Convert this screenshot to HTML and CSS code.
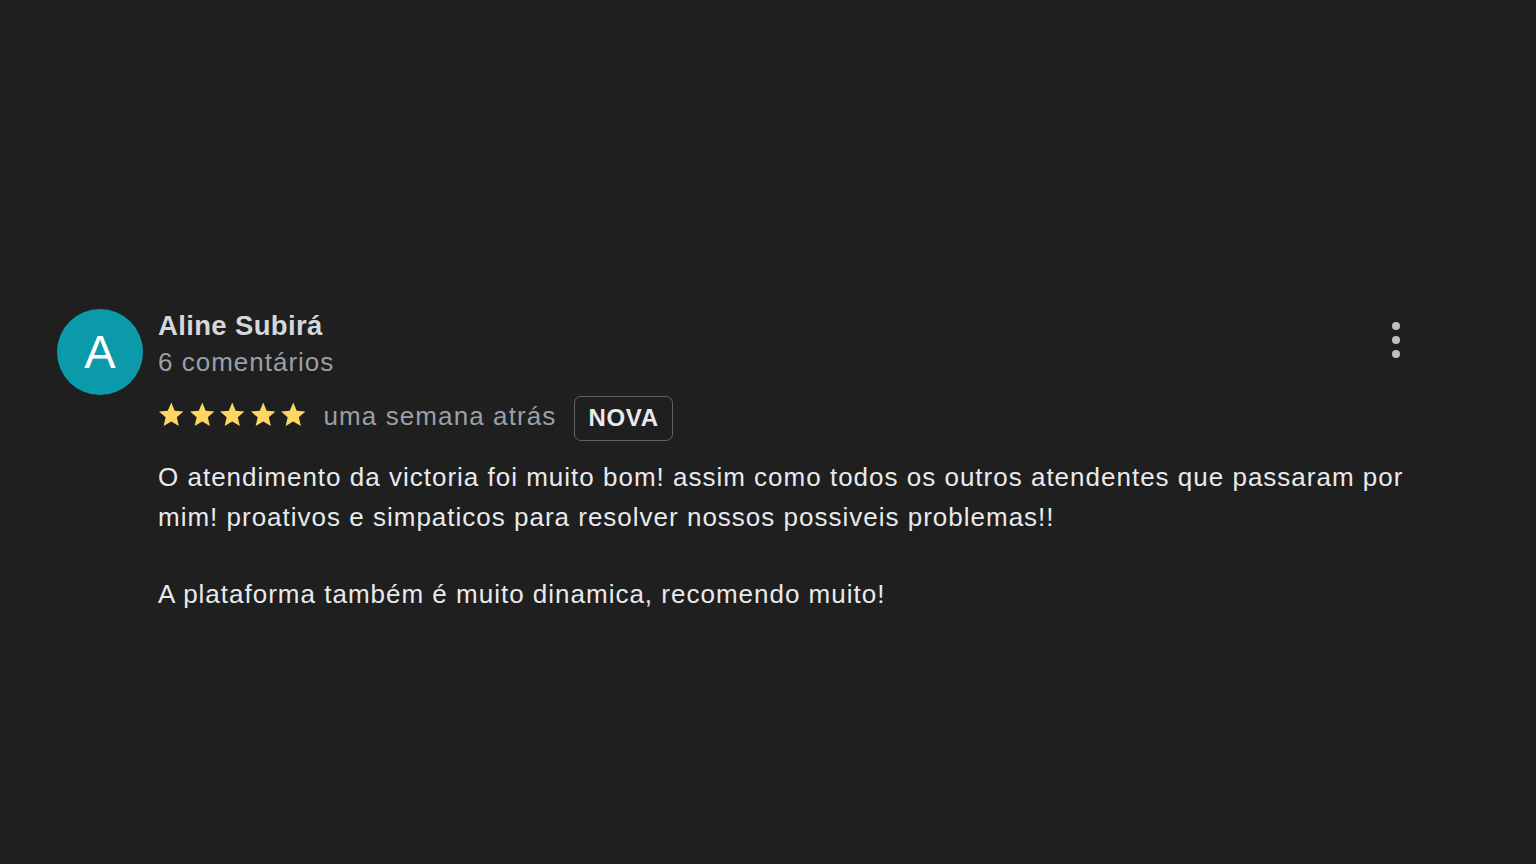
FILE: index.html
```html
<!DOCTYPE html>
<html lang="pt-BR">
<head>
<meta charset="utf-8">
<title>Avaliação</title>
<link rel="stylesheet" href="styles.css">
</head>
<body>
<div class="page">
  <div class="review">
    <div class="avatar">A</div>
    <div class="content">
      <div class="head">
        <div class="who">
          <div class="name">Aline Subirá</div>
          <div class="count">6 comentários</div>
        </div>
        <div class="menu" aria-label="Mais opções">
          <svg width="10" height="38" viewBox="0 0 10 38"><circle cx="5" cy="5" r="4"/><circle cx="5" cy="19" r="4"/><circle cx="5" cy="33" r="4"/></svg>
        </div>
      </div>
      <div class="meta">
        <div class="stars">
          <svg class="star" viewBox="0 0 24 24"><path d="M12 2.2l2.9 6.9 7.4.6-5.6 4.9 1.7 7.3L12 18l-6.4 3.9 1.7-7.3-5.6-4.9 7.4-.6z"/></svg>
          <svg class="star" viewBox="0 0 24 24"><path d="M12 2.2l2.9 6.9 7.4.6-5.6 4.9 1.7 7.3L12 18l-6.4 3.9 1.7-7.3-5.6-4.9 7.4-.6z"/></svg>
          <svg class="star" viewBox="0 0 24 24"><path d="M12 2.2l2.9 6.9 7.4.6-5.6 4.9 1.7 7.3L12 18l-6.4 3.9 1.7-7.3-5.6-4.9 7.4-.6z"/></svg>
          <svg class="star" viewBox="0 0 24 24"><path d="M12 2.2l2.9 6.9 7.4.6-5.6 4.9 1.7 7.3L12 18l-6.4 3.9 1.7-7.3-5.6-4.9 7.4-.6z"/></svg>
          <svg class="star" viewBox="0 0 24 24"><path d="M12 2.2l2.9 6.9 7.4.6-5.6 4.9 1.7 7.3L12 18l-6.4 3.9 1.7-7.3-5.6-4.9 7.4-.6z"/></svg>
        </div>
        <span class="date">uma semana atrás</span>
        <span class="badge">NOVA</span>
      </div>
      <div class="text">
        <p>O atendimento da victoria foi muito bom! assim como todos os outros atendentes que passaram por<br>mim! proativos e simpaticos para resolver nossos possiveis problemas!!</p>
        <p>A plataforma também é muito dinamica, recomendo muito!</p>
      </div>
    </div>
  </div>
</div>
</body>
</html>
```

FILE: styles.css
```css
html, body {
  margin: 0;
  padding: 0;
  background: #1f1f1f;
  height: 100%;
}
body {
  font-family: "Liberation Sans", Arial, sans-serif;
  color: #e8eaed;
}
.page {
  padding: 309px 0 0 57px;
}
.review {
  display: flex;
  gap: 15px;
  width: 1350px;
}
.avatar {
  flex: none;
  width: 86px;
  height: 86px;
  border-radius: 50%;
  background: #0a9aaa;
  color: #ffffff;
  font-size: 47px;
  line-height: 86px;
  text-align: center;
  font-weight: normal;
}
.content {
  flex: 1;
  min-width: 0;
}
.head {
  display: flex;
  justify-content: space-between;
  align-items: flex-start;
}
.name {
  font-size: 27.5px;
  font-weight: bold;
  color: #d5d7da;
  line-height: 34px;
  letter-spacing: 0.35px;
}
.count {
  font-size: 26px;
  color: #9aa0a6;
  line-height: 38px;
  letter-spacing: 1px;
}
.menu {
  padding-top: 12px;
  margin-right: 6px;
}
.menu svg {
  display: block;
  fill: #bdc1c6;
}
.meta {
  display: flex;
  align-items: center;
  margin-top: 11px;
}
.stars {
  display: flex;
  gap: 2px;
  margin-left: -1px;
  margin-bottom: 4px;
}
.star {
  width: 28.5px;
  height: 28.5px;
  fill: #fdd663;
  display: block;
}
.date {
  font-size: 26px;
  color: #9aa0a6;
  margin-left: 16px;
  letter-spacing: 1.1px;
}
.badge {
  margin-left: 18px;
  margin-top: 4px;
  border: 1.5px solid #5f6368;
  border-radius: 7px;
  padding: 0 13px;
  height: 45px;
  line-height: 42px;
  font-size: 24px;
  font-weight: bold;
  color: #e8eaed;
  letter-spacing: 0.7px;
  box-sizing: border-box;
  display: inline-block;
}
.text {
  margin-top: 16px;
  font-size: 26px;
  line-height: 40px;
  color: #e8eaed;
  letter-spacing: 1px;
}
.text p {
  margin: 0 0 37px 0;
}
```
